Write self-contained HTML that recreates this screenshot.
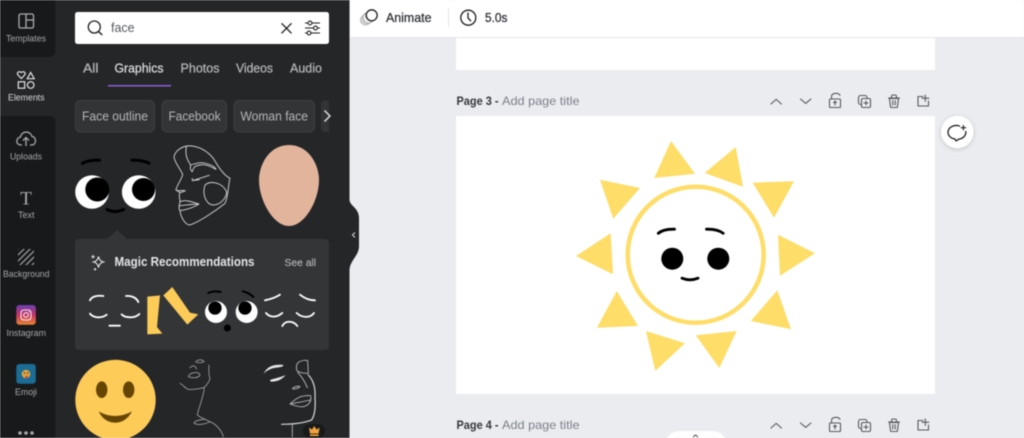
<!DOCTYPE html>
<html lang="en">
<head>
<meta charset="utf-8">
<title>Canvas editor</title>
<style>
html,body{margin:0;padding:0;width:1024px;height:438px;overflow:hidden;background:#ebecf0}
svg{display:block;filter:blur(.4px)}
text{font-family:"Liberation Sans",sans-serif}
.rl{font-size:9.5px;fill:#a5a7a9}
.tab{font-size:12.5px;fill:#b3b5b7;stroke:#b3b5b7;stroke-width:.25}
.chip{font-size:12.5px;fill:#b5b7b9}
.med{font-size:12.5px;fill:#33363a;stroke:#33363a;stroke-width:.3}
.ic{fill:none;stroke:#a9abad;stroke-width:1.3}
.hd{fill:none;stroke:#55585c;stroke-width:1.1;stroke-linecap:round;stroke-linejoin:round}
.wl{fill:none;stroke:#fff;stroke-width:5.5;stroke-linecap:round}
</style>
</head>
<body>
<svg width="1024" height="438" viewBox="0 0 1024 438" xmlns="http://www.w3.org/2000/svg">
<defs>
<linearGradient id="ig" x1="0" y1="0" x2="0" y2="1">
<stop offset="0" stop-color="#6b3fb0"/><stop offset=".5" stop-color="#c7336a"/><stop offset="1" stop-color="#e8862f"/>
</linearGradient>
<clipPath id="bgc"><rect x="18" y="249" width="16" height="16"/></clipPath>
<filter id="sh" x="-40%" y="-40%" width="180%" height="180%"><feDropShadow dx="0" dy="1" stdDeviation="2" flood-color="#000" flood-opacity=".18"/></filter>
</defs>

<!-- canvas background -->
<rect x="350" y="0" width="674" height="438" fill="#ebecf0"/>
<!-- top bar -->
<rect x="350" y="0" width="674" height="37" fill="#fff"/>
<rect x="350" y="37" width="674" height="1" fill="#e4e5e8"/>
<!-- pages -->
<rect x="456" y="38" width="479" height="32" fill="#fff"/>
<rect x="456" y="116" width="479" height="278" fill="#fff"/>

<!-- top bar content -->
<circle cx="365.5" cy="20" r="5" fill="#ddd" stroke="#bdbdbd" stroke-width="1.1"/>
<circle cx="368" cy="18" r="5.300" fill="#eee" stroke="#a8a8a8" stroke-width="1.1"/>
<circle cx="371.700" cy="15.300" r="5.500" fill="#fff" stroke="#1e1e1e" stroke-width="1.300"/>
<text class="med" x="386" y="22" textLength="45.500" lengthAdjust="spacingAndGlyphs">Animate</text>
<rect x="448" y="8" width="1" height="19" fill="#e3e4e6"/>
<circle cx="468.300" cy="17.700" r="7.500" fill="none" stroke="#1e1e1e" stroke-width="1.300"/>
<path d="M468 12.500V18l3 3.200" fill="none" stroke="#1e1e1e" stroke-width="1.300"/>
<text class="med" x="485" y="22" textLength="22.500" lengthAdjust="spacingAndGlyphs">5.0s</text>

<!-- page titles -->
<text x="456.500" y="105" font-size="12" font-weight="bold" fill="#33363a" textLength="42" lengthAdjust="spacingAndGlyphs">Page 3 -</text>
<text x="502" y="105" font-size="12" fill="#7b8087" textLength="77.500" lengthAdjust="spacingAndGlyphs">Add page title</text>
<text x="456.500" y="429" font-size="12" font-weight="bold" fill="#33363a" textLength="42" lengthAdjust="spacingAndGlyphs">Page 4 -</text>
<text x="502" y="429" font-size="12" fill="#7b8087" textLength="77.500" lengthAdjust="spacingAndGlyphs">Add page title</text>

<!-- page action icons -->
<g id="acts">
<path class="hd" d="M771 104l5.200-4.600 5.200 4.600"/>
<path class="hd" d="M800.500 99l5.200 4.400 5.200-4.400"/>
<rect class="hd" x="829.500" y="99" width="11" height="8.500" rx="1"/>
<path class="hd" d="M831.500 99v-2.500c0-3.600 6.500-4.200 8.500-1.200"/>
<path class="hd" d="M835 105v-3.500M833.600 102.600l1.400-1.400 1.400 1.400"/>
<rect class="hd" x="858.500" y="95.500" width="8.500" height="9" rx="2"/>
<rect class="hd" x="861.500" y="98.500" width="9" height="9" rx="1.500" style="fill:#ebecf0"/>
<path class="hd" d="M866 101v4M864 103h4"/>
<path class="hd" d="M889.500 98.500l1 8a1 1 0 0 0 1 1h5a1 1 0 0 0 1-1l1-8zM888.500 98h11M891.500 98v-1.500a1.500 1.500 0 0 1 1.500-1.500h2a1.500 1.500 0 0 1 1.500 1.500V98M892.800 100.500v4.500M895.200 100.500v4.500"/>
<path class="hd" d="M923 96.500h-5v9.500h10.500V101M925.300 95v6.500M922 98.200h6.800"/>
</g>
<use href="#acts" y="324"/>

<!-- comment button -->
<circle cx="957.300" cy="132" r="16.300" fill="#fff" filter="url(#sh)"/>
<path d="M960 126.200A8.300 6.800 0 1 0 955 139L956 141L959 139.100A8.300 6.800 0 0 0 965.700 131" fill="none" stroke="#1e1e1e" stroke-width="1.300" stroke-linejoin="round"/>
<path d="M963.400 125v5.400M960.700 127.700h5.400" stroke="#1e1e1e" stroke-width="1.100" fill="none"/>

<!-- bottom pill -->
<path d="M667 438c3-5 8-7 14-7h30c6 0 11 2 14 7z" fill="#fff"/>
<path d="M693 437l2.500-2 2.500 2" fill="none" stroke="#444" stroke-width="1"/>

<!-- sun -->
<g fill="#fedd68">
<polygon points="671,141 695,173.700 654.300,178"/>
<polygon points="735.700,147 743,186.700 704.700,173"/>
<polygon points="752.700,182.700 794,181.300 774,217.700"/>
<polygon points="778,234.700 815,253.300 780,275.700"/>
<polygon points="777.300,290.300 791,329.300 750.700,321"/>
<polygon points="736.700,331 719.300,368 695.700,335.300"/>
<polygon points="685,343.300 655.300,370.700 646,331"/>
<polygon points="638,326 597,327.700 616.700,291"/>
<polygon points="613,274.300 576,256 610.700,233.300"/>
<polygon points="640,188 613.300,218.700 600,179.700"/>
</g>
<circle cx="695.700" cy="254.700" r="68" fill="none" stroke="#fedd68" stroke-width="4.500"/>
<circle cx="672.300" cy="258.700" r="11" fill="#000"/>
<circle cx="718.300" cy="258.700" r="11" fill="#000"/>
<g fill="none" stroke="#000" stroke-width="2.800" stroke-linecap="round">
<path d="M658.300 233.300C662 230 668 229 674.500 229.200"/>
<path d="M706.500 229.200C713 229 719 230 723.200 233.300"/>
<path d="M682 278.200C687 280.200 693 280.200 698 278.200"/>
</g>

<!-- side panel -->
<path d="M0 0H349.500V200C350 206 359 208 359 218V246C359 256 350 260 349.500 270V438H0z" fill="#252628"/>
<path d="M355 232.500l-2.500 2.500 2.500 2.500" fill="none" stroke="#d5d5d5" stroke-width="1.100"/>
<!-- rail -->
<path d="M0 0H55.500V51a6 6 0 0 1-6 6H0z" fill="#18191b"/>
<path d="M0 116H49.500a6 6 0 0 1 6 6V438H0z" fill="#18191b"/>

<!-- rail icons -->
<rect class="ic" x="19" y="14" width="14.500" height="14" rx="1.500"/>
<path class="ic" d="M26 14V28M26 20H33.500"/>
<text class="rl" x="6" y="41.500" textLength="40" lengthAdjust="spacingAndGlyphs">Templates</text>

<g fill="none" stroke="#e3e4e5" stroke-width="1.200">
<path d="M21.300 78.500l-3.300-3.500c-1.500-2 .5-4.500 3.300-2.500 2.800-2 4.800.5 3.300 2.500z"/>
<path d="M30.700 72.500l3.500 6.200h-7z"/>
<rect x="18.300" y="81.800" width="6.400" height="6.400"/>
<circle cx="30.700" cy="85" r="3.300"/>
</g>
<text x="8" y="100.500" font-size="9.500" fill="#d9dadb" textLength="36.500" lengthAdjust="spacingAndGlyphs">Elements</text>

<path class="ic" d="M22 145h-1c-6 0-5-7.500-.5-8 1-6.500 10-6.500 11.500-.5 4.500 0 5 8.500-.5 8.500h-1.500"/>
<path class="ic" d="M26 146v-8.500M23 140.500l3-3 3 3"/>
<text class="rl" x="10" y="159.500" textLength="32" lengthAdjust="spacingAndGlyphs">Uploads</text>

<text x="26" y="204.500" text-anchor="middle" font-size="19" fill="#a9abad" style="font-family:'Liberation Serif',serif">T</text>
<text class="rl" x="18" y="218" textLength="16.500" lengthAdjust="spacingAndGlyphs">Text</text>

<g clip-path="url(#bgc)" stroke="#a0a2a4" stroke-width="1.200">
<path d="M10 257L26 241M13 260L29 244M16 263L32 247M19 266L35 250M22 269L38 253M25 272L41 256M28 275L44 259"/>
</g>
<text class="rl" x="3" y="277" textLength="46.500" lengthAdjust="spacingAndGlyphs">Background</text>

<rect x="16.300" y="305" width="19.500" height="19.700" rx="3" fill="url(#ig)"/>
<rect x="21" y="310" width="10" height="10" rx="2.800" fill="none" stroke="#f3e6e6" stroke-width="1.100"/>
<circle cx="26" cy="315" r="2.300" fill="none" stroke="#f3e6e6" stroke-width="1.100"/>
<circle cx="29" cy="312" r=".6" fill="#f3e6e6"/>
<text class="rl" x="6.500" y="336" textLength="39.500" lengthAdjust="spacingAndGlyphs">Instagram</text>

<rect x="16.300" y="364" width="19.500" height="19.700" rx="3" fill="#1c6c96"/>
<circle cx="26" cy="374" r="4.300" fill="#e0a43c"/>
<circle cx="24.500" cy="373" r=".8" fill="#444"/><circle cx="27.800" cy="373" r=".8" fill="#444"/>
<circle cx="26.500" cy="377" r="1.300" fill="#c9434a"/>
<text class="rl" x="15" y="395" textLength="22" lengthAdjust="spacingAndGlyphs">Emoji</text>

<g fill="#a5a7a9"><circle cx="20" cy="433" r="1.800"/><circle cx="26" cy="433" r="1.800"/><circle cx="32" cy="433" r="1.800"/></g>

<!-- search -->
<rect x="75" y="12" width="254" height="32" rx="2.500" fill="#fff"/>
<circle cx="94.300" cy="27" r="6" fill="none" stroke="#1e1e1e" stroke-width="1.300"/>
<path d="M98.500 31.500L102.300 35" stroke="#1e1e1e" stroke-width="1.400" fill="none"/>
<text x="111" y="32" font-size="13" fill="#54585d" textLength="23.500" lengthAdjust="spacingAndGlyphs">face</text>
<path d="M281.500 23.300L291.500 33.300M291.500 23.300L281.500 33.300" stroke="#1e1e1e" stroke-width="1.300" fill="none"/>
<g fill="#fff" stroke="#1e1e1e" stroke-width="1.100">
<path d="M305 23H320M305 28H320M305 33H320" fill="none"/>
<circle cx="310" cy="23" r="1.900"/><circle cx="315.500" cy="28" r="1.900"/><circle cx="309" cy="33" r="1.900"/>
</g>

<!-- tabs -->
<text class="tab" x="83" y="72.500" textLength="15.500" lengthAdjust="spacingAndGlyphs">All</text>
<text class="tab" x="114.500" y="72.500" style="fill:#dcdddf;stroke:#dcdddf" textLength="49" lengthAdjust="spacingAndGlyphs">Graphics</text>
<text class="tab" x="180.500" y="72.500" textLength="39" lengthAdjust="spacingAndGlyphs">Photos</text>
<text class="tab" x="236" y="72.500" textLength="37" lengthAdjust="spacingAndGlyphs">Videos</text>
<text class="tab" x="290" y="72.500" textLength="32" lengthAdjust="spacingAndGlyphs">Audio</text>
<rect x="108" y="85" width="63" height="1.500" fill="#8b5fd8"/>

<!-- chips -->
<g fill="#323436" stroke="#3d3f42">
<rect x="75.500" y="100.500" width="79" height="31.500" rx="5"/>
<rect x="162" y="100.500" width="64.500" height="31.500" rx="5"/>
<rect x="234" y="100.500" width="80.500" height="31.500" rx="5"/>
<path d="M329 100.500h-4a4 4 0 0 0-4 4v23.500a4 4 0 0 0 4 4h4z" stroke="none"/>
</g>
<text class="chip" x="82" y="120.500" textLength="66" lengthAdjust="spacingAndGlyphs">Face outline</text>
<text class="chip" x="168.500" y="120.500" textLength="52" lengthAdjust="spacingAndGlyphs">Facebook</text>
<text class="chip" x="240.500" y="120.500" textLength="67.500" lengthAdjust="spacingAndGlyphs">Woman face</text>
<path d="M324.500 110.500l5.500 5.500-5.500 5.500" fill="none" stroke="#e5e5e5" stroke-width="1.400"/>

<!-- graphic 1: face -->
<g fill="none" stroke="#000" stroke-width="3" stroke-linecap="round">
<path d="M82.500 163.300C87 160.800 93 160 99.500 160.200"/>
<path d="M132 160.200C138 160 144 160.800 149 163.300"/>
<path d="M107 209.500C112 212 118 212 123.500 209.500"/>
</g>
<circle cx="92" cy="192" r="16.800" fill="#fff"/><circle cx="97.300" cy="189.500" r="12" fill="#000"/>
<circle cx="138.700" cy="192" r="16.800" fill="#fff"/><circle cx="143.500" cy="189.500" r="11.500" fill="#000"/>

<!-- graphic 2: line face -->
<g transform="translate(160 140) scale(.3333)" fill="none" stroke="#d0d0d0" stroke-width="2.800" stroke-linecap="round" stroke-linejoin="round">
<path d="M80 18C60 22 45 35 42 50C42 65 60 85 68 103C65 120 50 135 48 150L60 158C55 165 60 175 60 185C58 195 55 205 60 212C62 230 75 255 90 255C120 245 170 210 195 190C205 170 205 130 210 115C190 105 175 80 160 55C140 30 110 15 80 18"/>
<path d="M80 18C75 35 78 55 92 75C90 85 90 92 97 95C100 85 100 78 120 75C140 70 160 85 168 88C165 78 140 68 120 68C110 70 100 72 92 75"/>
<path d="M97 122L148 106M97 115L97 122L118 119"/>
<path d="M135 135C150 122 185 125 200 155C200 175 180 195 160 195C140 195 125 165 135 135"/>
<path d="M48 150C55 155 65 150 76 152C70 157 62 157 60 158"/>
<path d="M60 185C75 178 95 185 117 192C105 200 85 208 60 212M60 197C80 195 100 192 117 192"/>
</g>

<!-- graphic 3: egg -->
<path d="M289 145C309 145 319 165 319 180C319 200 305 226 289 226C273 226 259 200 259 180C259 165 269 145 289 145z" fill="#e2b49c"/>

<!-- magic recommendations -->
<path d="M107 239L117 230L127 239z" fill="#333537"/>
<rect x="75" y="239" width="254" height="111" rx="4" fill="#333537"/>
<path d="M98.500 256.500c.8 3.500 2 4.700 5 5.500-3 .8-4.200 2-5 5.500-.8-3.500-2-4.700-5-5.500 3-.8 4.200-2 5-5.500z" fill="none" stroke="#e6e6e6" stroke-width="1.100"/>
<path d="M93 255v3.500M91.200 256.800h3.600M95 268v2.500M93.800 269.200h2.500" stroke="#e6e6e6" stroke-width="1" fill="none"/>
<text x="114.500" y="266" font-size="12.500" font-weight="bold" fill="#e4e5e6" textLength="140" lengthAdjust="spacingAndGlyphs">Magic Recommendations</text>
<text x="284.500" y="266" font-size="10.500" fill="#a9abad" stroke="#a9abad" stroke-width=".25" textLength="31.500" lengthAdjust="spacingAndGlyphs">See all</text>

<g transform="translate(80 282) scale(.3333)">
<path class="wl" d="M30 55C35 42 55 40 70 42M30 95C40 108 65 110 80 98M88 131H120M138 42C155 40 170 48 175 60M125 97C135 108 165 110 178 96"/>
<path d="M202 44L240 40L231 135L247 155L202 157z" fill="#fdcb58"/>
<path d="M250 40L277 15L330 92L355 97L322 128z" fill="#fdcb58"/>
<circle cx="408" cy="90" r="33" fill="#fff"/><circle cx="405" cy="78" r="20" fill="#000"/>
<circle cx="500" cy="90" r="33" fill="#fff"/><circle cx="495" cy="78" r="20" fill="#000"/>
<circle cx="442" cy="138" r="10.500" fill="#000"/>
<path d="M385 33C395 28 410 27 422 30M488 28C500 30 512 37 520 45" fill="none" stroke="#000" stroke-width="6" stroke-linecap="round"/>
<path class="wl" d="M555 55C570 52 590 45 600 38M660 38C675 50 690 55 705 55M558 93C570 107 590 108 607 93M650 93C665 107 690 110 702 93M607 132C615 115 640 115 652 132"/>
</g>

<!-- bottom row: smiley -->
<circle cx="115.500" cy="400" r="40.200" fill="#fdcb58"/>
<ellipse cx="101.700" cy="389.700" rx="5.700" ry="8.300" fill="#664500"/>
<ellipse cx="128.700" cy="389.700" rx="5.700" ry="8.300" fill="#664500"/>
<path d="M98.700 411.300C108 417.500 122 417.500 132 411.300C128 419 122 422.700 115.300 422.700C108.500 422.700 102 419 98.700 411.300z" fill="#664500"/>

<!-- bottom row: line art -->
<g transform="translate(170 355) scale(.3333)">
<g fill="none" stroke="#9d9d9d" stroke-width="2.600" stroke-linecap="round" stroke-linejoin="round">
<path d="M80 17C90 12 100 15 102 20C95 24 85 24 76 20M60 38C68 30 75 30 80 42M55 65C60 52 85 48 90 60C85 70 65 70 55 65"/>
<path d="M30 85C40 90 45 100 55 103C70 105 95 100 103 97C110 90 118 80 120 70C115 60 117 40 117 30"/>
<path d="M103 97C100 130 85 160 82 180C95 190 110 195 120 200C135 205 155 225 160 245M120 200C105 208 80 212 72 204C75 195 95 195 105 192"/>
</g>
<path d="M280 58C290 35 310 27 340 30C340 38 320 36 305 41C295 45 285 50 280 58zM300 75C315 70 335 66 347 60C335 75 320 80 302 80z" fill="#e8e8e8"/>
<g fill="none" stroke="#bdbdbd" stroke-width="2.600" stroke-linecap="round" stroke-linejoin="round">
<path d="M385 22C395 15 410 15 413 17L415 55C395 55 385 52 380 45C378 35 380 27 385 22"/>
<path d="M383 52C395 65 405 80 412 98"/>
<path d="M415 60C430 75 437 100 435 130C437 160 435 180 425 195C400 205 365 208 335 208" stroke="#d8d8d8" stroke-width="3.600"/>
<path d="M367 100C372 105 385 100 390 95C385 92 375 95 367 100"/>
<path d="M360 147C375 135 385 120 422 122C425 135 420 150 400 155C385 157 370 150 360 147M360 147C380 143 400 140 422 135"/>
<path d="M367 210V245"/>
</g>
</g>

<!-- crown badge -->
<rect x="303" y="424" width="22" height="14" rx="7" fill="#18191b"/>
<path d="M310 433.500L309 427.500L312 429.500L314.300 426L316.600 429.500L319.600 427.500L318.600 433.500z" fill="#f0a33c"/>
<rect x="310" y="434.300" width="8.600" height="1.700" fill="#f0a33c"/>
</svg>
</body>
</html>
